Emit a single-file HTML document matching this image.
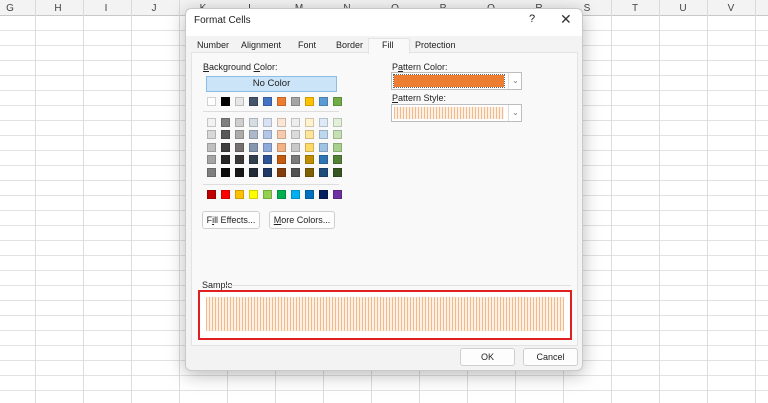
<!DOCTYPE html>
<html><head><meta charset="utf-8"><style>
*{margin:0;padding:0;box-sizing:border-box}
body{width:768px;height:403px;overflow:hidden;background:#fff;font-family:"Liberation Sans",sans-serif;position:relative;font-size:9px;color:#222}
.grid{position:absolute;left:0;top:0;width:768px;height:403px;
background-image:linear-gradient(to right,#dcdcdc 1px,transparent 1px),linear-gradient(to bottom,#e2e2e2 1px,transparent 1px);
background-size:48px 15px;background-position:35px 0px}
.hdr{position:absolute;left:0;top:0;width:768px;height:16px;background:#f3f3f3;border-bottom:1px solid #c8c8c8}
.hdr span{position:absolute;top:3px;width:48px;text-align:center;font-size:10px;color:#444}
.hdr i{position:absolute;top:0;width:1px;height:16px;background:#dadada}
.dlg{position:absolute;left:185px;top:8px;width:398px;height:363px;background:#f3f3f3;border:1px solid #c9c9c9;border-radius:6px;box-shadow:0 4px 18px rgba(0,0,0,.28)}
.title{position:absolute;left:0;top:0;width:396px;height:27px;background:#fff;border-radius:6px 6px 0 0}
.a{position:absolute}
.panel{position:absolute;left:5px;top:43px;width:387px;height:294px;background:#f9f9f9;border:1px solid #e3e3e3}
.tab{position:absolute;top:31px;font-size:9px;color:#222}
.sw{position:absolute;width:9px;height:9px;border:1px solid rgba(0,0,0,.18)}
.btn{position:absolute;background:#fdfdfd;border:1px solid #cfcfcf;border-radius:3px;text-align:center;font-size:9px;line-height:16px}
.combo{position:absolute;left:205px;width:131px;height:18px;background:#fff;border:1px solid #bdbdbd}
.stripes{background:repeating-linear-gradient(to right,#f2b98a 0 1px,#fdf1e6 1px 3px)}
</style></head><body>
<div class="grid"></div>
<div class="hdr">
<span style="left:-14px">G</span><span style="left:34px">H</span><span style="left:82px">I</span><span style="left:130px">J</span><span style="left:179px">K</span><span style="left:227px">L</span><span style="left:275px">M</span><span style="left:323px">N</span><span style="left:371px">O</span><span style="left:419px">P</span><span style="left:467px">Q</span><span style="left:515px">R</span><span style="left:563px">S</span><span style="left:611px">T</span><span style="left:659px">U</span><span style="left:707px">V</span>
<i style="left:35px"></i><i style="left:83px"></i><i style="left:131px"></i><i style="left:179px"></i><i style="left:611px"></i><i style="left:659px"></i><i style="left:707px"></i><i style="left:755px"></i>
</div>
<div class="dlg">
<div class="title"></div>
<div class="a" style="left:8px;top:6px;font-size:10px">Format Cells</div>
<div class="a" style="left:343px;top:4px;font-size:11px">?</div>
<div class="a" style="left:374px;top:2px;font-size:14px;color:#333">✕</div>
<div class="panel"></div>
<div class="a" style="left:182px;top:29px;width:42px;height:16px;background:#f9f9f9;border:1px solid #e3e3e3;border-bottom:none"></div>
<div class="tab" style="left:11px">Number</div>
<div class="tab" style="left:55px">Alignment</div>
<div class="tab" style="left:112px">Font</div>
<div class="tab" style="left:150px">Border</div>
<div class="tab" style="left:196px">Fill</div>
<div class="tab" style="left:229px">Protection</div>
<div class="a" style="left:17px;top:53px"><u>B</u>ackground <u>C</u>olor:</div>
<div class="a" style="left:20px;top:67px;width:131px;height:16px;background:#cce4f7;border:1px solid #8cbde6;text-align:center;line-height:14px;font-size:9.5px">No Color</div>
<div class="a" style="left:17px;top:102px;width:136px;height:1px;background:#ddd"></div>
<div class="a" style="left:17px;top:175px;width:136px;height:1px;background:#ddd"></div>
<!-- swatches -->
<div class="sw" style="left:21px;top:88px;background:#fff"></div><div class="sw" style="left:35px;top:88px;background:#000"></div><div class="sw" style="left:49px;top:88px;background:#e7e6e6"></div><div class="sw" style="left:63px;top:88px;background:#44546a"></div><div class="sw" style="left:77px;top:88px;background:#4472c4"></div><div class="sw" style="left:91px;top:88px;background:#ed7d31"></div><div class="sw" style="left:105px;top:88px;background:#a5a5a5"></div><div class="sw" style="left:119px;top:88px;background:#ffc000"></div><div class="sw" style="left:133px;top:88px;background:#5b9bd5"></div><div class="sw" style="left:147px;top:88px;background:#70ad47"></div>

<div class="sw" style="left:21px;top:109px;background:#f2f2f2"></div><div class="sw" style="left:35px;top:109px;background:#7f7f7f"></div><div class="sw" style="left:49px;top:109px;background:#d0cece"></div><div class="sw" style="left:63px;top:109px;background:#d6dce4"></div><div class="sw" style="left:77px;top:109px;background:#d9e2f3"></div><div class="sw" style="left:91px;top:109px;background:#fbe5d5"></div><div class="sw" style="left:105px;top:109px;background:#ededed"></div><div class="sw" style="left:119px;top:109px;background:#fff2cc"></div><div class="sw" style="left:133px;top:109px;background:#deebf6"></div><div class="sw" style="left:147px;top:109px;background:#e2efd9"></div>

<div class="sw" style="left:21px;top:121px;background:#d8d8d8"></div><div class="sw" style="left:35px;top:121px;background:#595959"></div><div class="sw" style="left:49px;top:121px;background:#aeabab"></div><div class="sw" style="left:63px;top:121px;background:#adb9ca"></div><div class="sw" style="left:77px;top:121px;background:#b4c6e7"></div><div class="sw" style="left:91px;top:121px;background:#f7cbac"></div><div class="sw" style="left:105px;top:121px;background:#dbdbdb"></div><div class="sw" style="left:119px;top:121px;background:#fee599"></div><div class="sw" style="left:133px;top:121px;background:#bdd7ee"></div><div class="sw" style="left:147px;top:121px;background:#c5e0b3"></div>

<div class="sw" style="left:21px;top:134px;background:#bfbfbf"></div><div class="sw" style="left:35px;top:134px;background:#3f3f3f"></div><div class="sw" style="left:49px;top:134px;background:#757070"></div><div class="sw" style="left:63px;top:134px;background:#8496b0"></div><div class="sw" style="left:77px;top:134px;background:#8eaadb"></div><div class="sw" style="left:91px;top:134px;background:#f4b183"></div><div class="sw" style="left:105px;top:134px;background:#c9c9c9"></div><div class="sw" style="left:119px;top:134px;background:#ffd965"></div><div class="sw" style="left:133px;top:134px;background:#9dc3e6"></div><div class="sw" style="left:147px;top:134px;background:#a8d08d"></div>

<div class="sw" style="left:21px;top:146px;background:#a5a5a5"></div><div class="sw" style="left:35px;top:146px;background:#262626"></div><div class="sw" style="left:49px;top:146px;background:#3a3838"></div><div class="sw" style="left:63px;top:146px;background:#323f4f"></div><div class="sw" style="left:77px;top:146px;background:#2f5496"></div><div class="sw" style="left:91px;top:146px;background:#c55a11"></div><div class="sw" style="left:105px;top:146px;background:#7b7b7b"></div><div class="sw" style="left:119px;top:146px;background:#bf8f00"></div><div class="sw" style="left:133px;top:146px;background:#2e75b5"></div><div class="sw" style="left:147px;top:146px;background:#538135"></div>

<div class="sw" style="left:21px;top:159px;background:#7f7f7f"></div><div class="sw" style="left:35px;top:159px;background:#0c0c0c"></div><div class="sw" style="left:49px;top:159px;background:#171616"></div><div class="sw" style="left:63px;top:159px;background:#222a35"></div><div class="sw" style="left:77px;top:159px;background:#1f3864"></div><div class="sw" style="left:91px;top:159px;background:#833c0b"></div><div class="sw" style="left:105px;top:159px;background:#525252"></div><div class="sw" style="left:119px;top:159px;background:#7f6000"></div><div class="sw" style="left:133px;top:159px;background:#1e4e79"></div><div class="sw" style="left:147px;top:159px;background:#375623"></div>

<div class="sw" style="left:21px;top:181px;background:#c00000"></div><div class="sw" style="left:35px;top:181px;background:#ff0000"></div><div class="sw" style="left:49px;top:181px;background:#ffc000"></div><div class="sw" style="left:63px;top:181px;background:#ffff00"></div><div class="sw" style="left:77px;top:181px;background:#92d050"></div><div class="sw" style="left:91px;top:181px;background:#00b050"></div><div class="sw" style="left:105px;top:181px;background:#00b0f0"></div><div class="sw" style="left:119px;top:181px;background:#0070c0"></div><div class="sw" style="left:133px;top:181px;background:#002060"></div><div class="sw" style="left:147px;top:181px;background:#7030a0"></div>

<div class="btn" style="left:16px;top:202px;width:58px;height:18px">F<u>i</u>ll Effects...</div>
<div class="btn" style="left:83px;top:202px;width:66px;height:18px"><u>M</u>ore Colors...</div>

<div class="a" style="left:206px;top:53px">P<u>a</u>ttern Color:</div>
<div class="combo" style="top:63px"><div class="a" style="left:2px;top:2px;width:110px;height:12px;background:#ed7d31;outline:1px dotted #666"></div><div class="a" style="left:116px;top:0;width:14px;height:16px;border-left:1px solid #ddd;text-align:center;font-size:8px;line-height:16px;color:#777">&#8964;</div></div>
<div class="a" style="left:206px;top:84px"><u>P</u>attern Style:</div>
<div class="combo" style="top:95px"><div class="a stripes" style="left:2px;top:2px;width:110px;height:12px"></div><div class="a" style="left:116px;top:0;width:14px;height:16px;border-left:1px solid #ddd;text-align:center;font-size:8px;line-height:16px;color:#777">&#8964;</div></div>

<div class="a" style="left:16px;top:271px">Sample</div>
<div class="a" style="left:40px;top:276px;width:345px;height:1px;background:#e0e0e0"></div>
<div class="a" style="left:12px;top:281px;width:374px;height:50px;border:2px solid #e02020;background:#fff"></div>
<div class="a stripes" style="left:20px;top:288px;width:358px;height:34px"></div>

<div class="btn" style="left:274px;top:339px;width:55px;height:18px">OK</div>
<div class="btn" style="left:337px;top:339px;width:55px;height:18px">Cancel</div>
</div>
</body></html>
